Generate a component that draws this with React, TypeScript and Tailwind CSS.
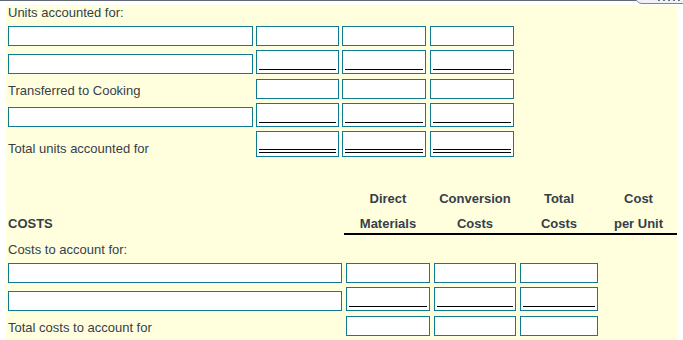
type LineKind = 'none' | 'single' | 'double';

function Box({ className, line = 'none' }: { className: string; line?: LineKind }) {
  return (
    <div
      className={`flex flex-col justify-end border border-[#0e7a96] bg-white px-[2px] pb-[3px] ${className}`}
    >
      {line === 'single' && <div className="border-b border-black" />}
      {line === 'double' && <div className="h-[4px] border-y border-black" />}
    </div>
  );
}

function UnitsRow({
  label,
  input,
  h,
  line,
  className = '',
}: {
  label?: string;
  input?: boolean;
  h: string;
  line?: LineKind;
  className?: string;
}) {
  return (
    <div className={`flex items-end ${h} ${className}`}>
      {input ? (
        <Box className="w-[245px] h-[20px]" />
      ) : (
        <div className="w-[245px] leading-[16px]">{label}</div>
      )}
      <Box className={`ml-[3px] w-[83px] ${h}`} line={line} />
      <Box className={`ml-[3px] w-[84px] ${h}`} line={line} />
      <Box className={`ml-[4px] w-[84px] ${h}`} line={line} />
    </div>
  );
}

function CostsRow({
  label,
  input,
  h,
  line,
  className = '',
}: {
  label?: string;
  input?: boolean;
  h: string;
  line?: LineKind;
  className?: string;
}) {
  return (
    <div className={`flex items-end ${h} ${className}`}>
      {input ? (
        <Box className="w-[334px] h-[20px]" />
      ) : (
        <div className="w-[334px] leading-[16px]">{label}</div>
      )}
      <Box className={`ml-[4px] w-[84px] ${h}`} line={line} />
      <Box className={`ml-[4px] w-[82px] ${h}`} line={line} />
      <Box className={`ml-[4px] w-[78px] ${h}`} line={line} />
    </div>
  );
}

const headers = [
  { top: 'Direct', bottom: 'Materials', w: 'w-[88px]' },
  { top: 'Conversion', bottom: 'Costs', w: 'w-[86px]' },
  { top: 'Total', bottom: 'Costs', w: 'w-[82px]' },
  { top: 'Cost', bottom: 'per Unit', w: 'w-[77px]' },
];

export default function App() {
  return (
    <div className="relative w-[683px] h-[340px] overflow-hidden bg-white font-['Liberation_Sans',Arial,sans-serif] text-[13px] text-[#363e4a]">
      {/* top rule + cut-off tab */}
      <div className="h-px w-[636px] bg-[#5f6873]" />
      <div className="absolute left-[635px] top-[-12px] flex h-[16px] w-[60px] items-end gap-[3px] rounded-bl-[7px] border border-[#7d8690] bg-[#f1f2f3] pb-[2px] pl-[22px]">
        {[0, 1, 2, 3, 4].map((i) => (
          <div key={i} className="h-[2px] w-[2px] bg-[#6b747e]" />
        ))}
      </div>

      <div className="ml-[6px] mt-[4px] h-[335px] w-[671px] bg-[#ffffde] pl-[2px]">
        {/* Units section */}
        <div className="h-[21px] leading-[16px]">Units accounted for:</div>
        <UnitsRow input h="h-[20px]" />
        <UnitsRow input h="h-[24px]" line="single" className="mt-[4px]" />
        <UnitsRow label="Transferred to Cooking" h="h-[20px]" className="mt-[5px]" />
        <UnitsRow input h="h-[24px]" line="single" className="mt-[4px]" />
        <UnitsRow label="Total units accounted for" h="h-[26px]" line="double" className="mt-[4px]" />

        {/* Costs header */}
        <div className="mt-[34px] flex items-end">
          <div className="w-[336px] pb-[3px] font-bold leading-[16px]">COSTS</div>
          <div className="flex w-[333px] border-b-2 border-black pb-[1px] font-bold">
            {headers.map((c) => (
              <div key={c.top} className={`flex flex-col items-center ${c.w}`}>
                <div className="h-[16px] leading-[16px]">{c.top}</div>
                <div className="mt-[9px] h-[16px] leading-[16px]">{c.bottom}</div>
              </div>
            ))}
          </div>
        </div>

        <div className="mt-[7px] h-[16px] leading-[16px]">Costs to account for:</div>
        <CostsRow input h="h-[20px]" className="mt-[5px]" />
        <CostsRow input h="h-[24px]" line="single" className="mt-[4px]" />
        <CostsRow label="Total costs to account for" h="h-[20px]" className="mt-[5px]" />
      </div>
    </div>
  );
}
